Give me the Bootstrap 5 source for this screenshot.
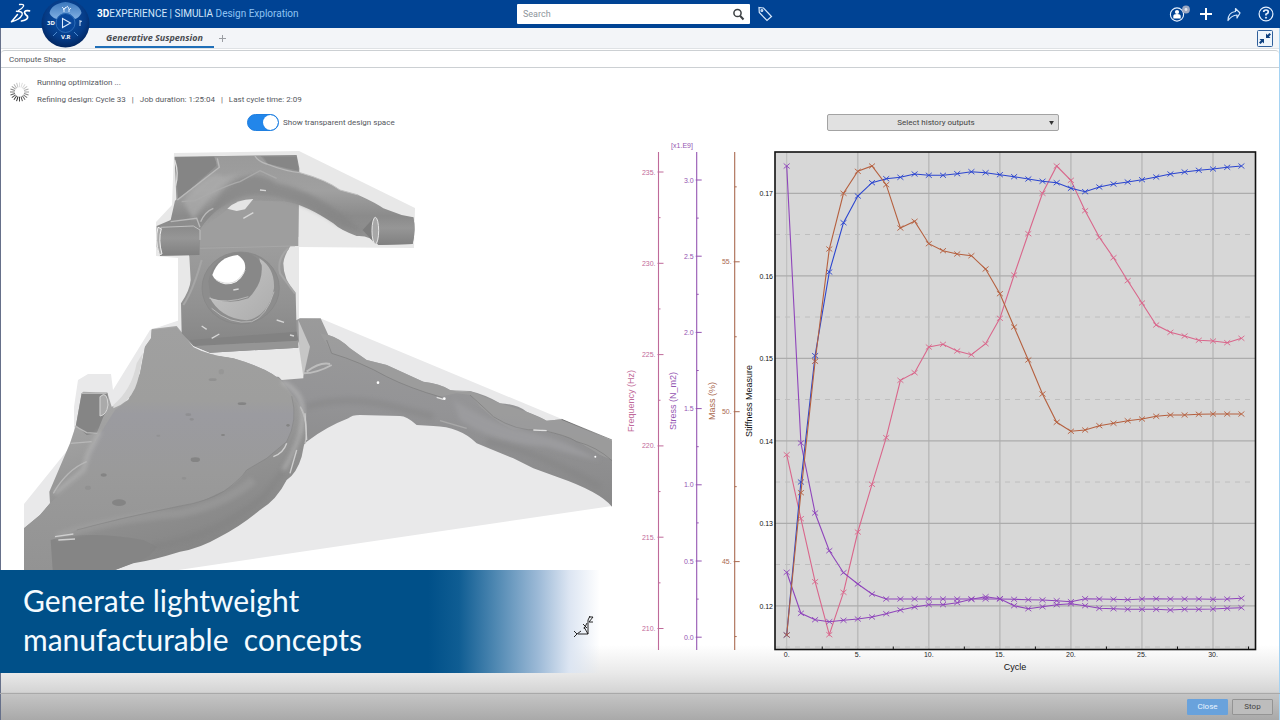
<!DOCTYPE html>
<html lang="en">
<head>
<meta charset="utf-8">
<meta name="viewport" content="width=device-width, initial-scale=1">
<title>Generative Suspension</title>
<link href="https://cdn.jsdelivr.net/npm/bootstrap@5.3.0/dist/css/bootstrap.min.css" rel="stylesheet">
<script src="https://cdn.jsdelivr.net/npm/bootstrap@5.3.0/dist/js/bootstrap.bundle.min.js"></script>
<style>
  body { font-family: Roboto, "Noto Sans", sans-serif; font-size: 8px; line-height: 12px; color: #55585e; background: #fff; }
  svg { display: block; }
  .app { background: linear-gradient(to top, #a9a9a9 0, #c6c6c6 27px, #d4d4d4 28px, #e9e9e9 47px, #fff 75px) no-repeat; box-shadow: inset 1px 0 #66708a, inset -1px 0 #a5d3f3; }
  .topbar { height: 28px; background: #004394; color: #fff; }
  .side-a { flex: 517 1 0; min-width: 0; }
  .side-b { flex: 530 1 0; min-width: 0; }
  .tools { margin-right: 5px; }
  .help { margin-left: 6px; }
  .brand-text { font-size: 10px; color: #d3e6fa; margin-left: 65px; }
  .brand-text strong { color: #fff; }
  .brand-text .product { color: #8fc3f3; }
  .compass { left: 41px; top: 0; z-index: 5; }
  .finder { width: 233px; height: 20px; background: #fff; border-radius: 1px; }
  .finder input { font-size: 9px; line-height: 12px; color: #444; padding: 0 6px; border: 0; background: transparent; box-shadow: none; min-height: 0; }
  .finder input::placeholder { color: #8e959c; }
  .bare { padding: 0; border: 0; background: none; color: #fff; line-height: 1; }
  .tabs { height: 21px; background: #f3f5f8; border-bottom: 1px solid #dfe2e5; padding-left: 94px; padding-right: 6px; margin: 0 1px; }
  .tab-link { width: 119px; height: 20px; font: italic bold 9px/20px "Noto Sans", "Open Sans", sans-serif; color: #4a4d52; border-bottom: 2px solid #1f6fb8; text-decoration: none; text-align: center; }
  .panel-title { height: 18px; margin: 1px 1px 0; padding: 0 8px; border: solid #ccd0d3; border-width: 1px 0; border-radius: 4px 4px 0 0; font-size: 8px; line-height: 17px; font-weight: 400; }
  .col-model { flex: 612 1 0; min-width: 0; }
  .col-chart { flex: 668 1 0; min-width: 0; }
  .status { height: 46px; padding: 9px 10px 0; }
  .status p { margin: 0 0 5px; }
  .status .split { margin: 0 6px; }
  .toggle-row { height: 18px; min-height: 0; padding: 0 0 1px 247px; }
  .form-switch .form-check-input.wide { width: 32px; height: 17px; margin: 0 4px 0 0; border-color: #1f7fe0; background-color: #2286ea; background-image: url("data:image/svg+xml,%3Csvg xmlns='http://www.w3.org/2000/svg' viewBox='0 0 16 16'%3E%3Ccircle cx='8' cy='8' r='8' fill='%23fff'/%3E%3C/svg%3E"); }
  .select-row { padding: 46px 0 0 215px; height: 64px; }
  .history { width: 232px; height: 17px; font-size: 8px; line-height: 12px; padding: 0 16px 0 2px; min-height: 0; text-align: center; text-align-last: center; color: #444; border: 1px solid #a3a3a3; border-radius: 2px; background: #e1e1e1 url("data:image/svg+xml,%3Csvg xmlns='http://www.w3.org/2000/svg' viewBox='0 0 6 5'%3E%3Cpath d='M0 0h6L3 5z' fill='%23333'/%3E%3C/svg%3E") no-repeat right 4px center / 5px 4px; }
  .caption-bar { height: 103px; padding: 11px 17px 0 23px; color: #f4fbff; font-family: Lato, sans-serif; font-size: 30px; line-height: 39px; background: linear-gradient(to right, #005089 0, #005089 70%, #0f5d93 75%, #4f88b2 81%, #9dbad7 88%, #dce5f2 93%, rgba(255,255,255,0) 98%); }
  .caption-bar p { white-space: pre; }
  .foot { height: 27px; border-top: 1px solid #a9a9a9; padding-right: 7px; }
  .foot .btn { width: 41px; height: 16px; padding: 0; font-size: 8px; line-height: 12px; border-radius: 1px; }
  .btn-close-job { background: #69a2dc; border-color: #69a2dc; color: #e9f4ff; }
  .btn-stop { background: #bdbdbd; border-color: #949494; color: #444; }
  .plot text { font-family: "Liberation Sans", Arial, sans-serif; font-size: 7px; }
  .plot .axis-name { font-size: 9px; }
</style>
</head>
<body>
<div class="app d-flex flex-column min-vh-100" id="app">
  <header class="topbar d-flex align-items-center position-relative">
    <div class="side-a d-flex align-items-center">
      <svg class="ms-2" width="24" height="22" viewBox="0 0 24 22" fill="none" stroke="#fff" stroke-linecap="round" stroke-linejoin="round" role="img" aria-label="DS">
        <path d="M11.500 1.500Q16.500 .8 15.500 3.200Q14.500 5.200 10.500 7.500" stroke-width="1.300"/>
        <path d="M8.500 8.300Q15.500 8.300 14 12Q12 16.500 3.500 18.800L9.500 11.500" stroke-width="1.500"/>
        <path d="M21.500 7.800Q16.500 7 16.500 9.500Q17 11.500 19.500 13.300Q20.800 16.500 13.500 18" stroke-width="1.700"/>
      </svg>
      <div class="brand-text text-nowrap"><strong>3D</strong>EXPERIENCE | SIMULIA <span class="product">Design Exploration</span></div>
    </div>
    <button class="compass bare position-absolute" type="button" aria-label="Compass">
      <svg width="49" height="48" viewBox="0 0 49 48">
        <defs><radialGradient id="ball" cx=".5" cy=".4" r=".6"><stop offset="0" stop-color="#0c55ac"/><stop offset=".7" stop-color="#053b86"/><stop offset="1" stop-color="#022660"/></radialGradient>
        <linearGradient id="lit" x2="0" y2="1"><stop offset="0" stop-color="#3c78bd"/><stop offset="1" stop-color="#80afe2"/></linearGradient></defs>
        <circle cx="24.500" cy="23.500" r="24" fill="url(#ball)"/>
        <path d="M8.500 13Q10 4 24.500 2Q39 4 40.500 13Q38 18 34 19Q30 13 24.500 13Q19 13 15.500 19Q10 17 8.500 13Z" fill="url(#lit)"/>
        <circle cx="24.500" cy="23" r="9.500" fill="#08479b" stroke="#3e7cc3" stroke-width=".7"/>
        <path d="M21.500 18.500L29.500 23L21.500 27.500Z" fill="none" stroke="#dcecff" stroke-width="1.100"/>
        <path d="M16 32L12 36M33 32L37 36" stroke="#4e8ace"/>
        <path d="M21 7l2 2v3m2-5l-2 2m4-2l1 2v3m2-4l-2 2m-6 0l5-4M39 20v6m0-4l2-1" stroke="#e4f0ff" fill="none" stroke-width=".9"/>
        <g fill="#fff" font-family="Open Sans, sans-serif" font-weight="700" font-size="6"><text x="6" y="25">3D</text><text x="20" y="39">V.R</text></g>
      </svg>
    </button>
    <form class="finder d-flex align-items-center" role="search">
      <input class="form-control" type="search" placeholder="Search" aria-label="Search">
      <button class="bare pe-1" type="button" aria-label="Find"><svg width="14" height="14" viewBox="0 0 14 14" fill="none" stroke="#3c4043"><circle cx="5.500" cy="6" r="3.600" stroke-width="1.500"/><path d="M8 8.700L11.500 12.500" stroke-width="2"/></svg></button>
    </form>
    <div class="side-b d-flex align-items-center">
      <button class="bare ms-2 me-auto" type="button" aria-label="Tags"><svg width="16" height="18" viewBox="0 0 16 18" fill="none" stroke="#d5e7fb" stroke-width="1.200"><path d="M1 2.500L5.500 3L13.500 11.500L9 15.500L1.300 7.500Z"/><circle cx="3.900" cy="5.500" r=".9"/></svg></button>
      <div class="tools d-flex align-items-center gap-2">
        <button class="bare" type="button" aria-label="Profile"><svg width="22" height="20" viewBox="0 0 22 20"><circle cx="8" cy="10.500" r="6.600" fill="none" stroke="#e6f1ff" stroke-width="1.100"/><circle cx="8" cy="8" r="2.100" fill="#fff"/><path d="M4.300 14.500V12q0-2 3.700-2t3.700 2v2.500Z" fill="#fff"/><circle cx="17" cy="5.500" r="3.900" fill="#9ca8c2"/><circle cx="17" cy="5.500" r="1.400" fill="#e3e7ef"/></svg></button>
        <button class="bare" type="button" aria-label="Add"><svg width="14" height="14" viewBox="0 0 14 14" stroke="#fff" stroke-width="2"><path d="M7 1v12M1 7h12"/></svg></button>
        <button class="bare ms-1" type="button" aria-label="Share"><svg width="18" height="16" viewBox="0 0 18 16" fill="none" stroke="#d5e7fb" stroke-width="1.200" stroke-linejoin="round"><path d="M3 14.500Q3 6.500 10.500 5.500V2.500L15 7L12 12V9Q6.500 9.500 3 14.500Z"/></svg></button>
        <button class="bare help" type="button" aria-label="Help"><svg width="18" height="18" viewBox="0 0 18 18" fill="none" stroke="#e6f1ff"><circle cx="9" cy="9" r="6.900" stroke-width="1.200"/><path d="M6.700 7Q6.700 5 9 5T11.300 7Q11.300 8.300 9 9.200V10.500" stroke-width="1.700"/><circle cx="9" cy="12.700" r=".6" fill="#fff"/></svg></button>
      </div>
    </div>
  </header>

  <nav class="tabs d-flex align-items-center">
    <a class="tab-link" href="#app">Generative Suspension</a>
    <button class="bare ms-1" type="button" aria-label="New tab"><svg width="9" height="9" viewBox="0 0 9 9" stroke="#9b9ea3"><path d="M4.500 1v7M1 4.500h7"/></svg></button>
    <button class="bare ms-auto" type="button" aria-label="Collapse"><svg width="16" height="17" viewBox="0 0 16 17"><rect x=".5" y=".5" width="15" height="16" rx="1" fill="#eef5fc" stroke="#2f5f9b"/><path d="M9 3.500V8H13.500L12 6.500L14 4.500L12.500 3L10.500 5ZM7 13.500V9H2.500L4 10.500L2 12.500L3.500 14L5.500 12Z" fill="#0c3f7f"/></svg></button>
  </nav>

  <h1 class="panel-title">Compute Shape</h1>

  <main class="d-flex flex-grow-1">
    <section class="col-model d-flex flex-column">
      <div class="status d-flex">
        <svg class="me-2 mt-1" width="19" height="22" viewBox="-10 -11 20 22" id="spinner" role="img" aria-label="Busy"></svg>
        <div class="text-nowrap">
          <p>Running optimization ...</p>
          <p>Refining design: Cycle 33<span class="split">|</span>Job duration: 1:25:04<span class="split">|</span>Last cycle time: 2:09</p>
        </div>
      </div>
      <div class="toggle-row form-check form-switch d-flex align-items-center m-0">
        <input class="form-check-input wide" type="checkbox" role="switch" id="transparent" checked>
        <label for="transparent">Show transparent design space</label>
      </div>
      <svg width="100%" viewBox="0 132 612 438" role="img" aria-label="Suspension model">
        <defs>
          <linearGradient id="arm" x2="0" y2="1"><stop offset="0" stop-color="#9a9a9a"/><stop offset=".35" stop-color="#a0a0a0"/><stop offset=".6" stop-color="#8b8b8b"/><stop offset="1" stop-color="#949494"/></linearGradient>
          <linearGradient id="tube" x2="0" y2="1"><stop offset="0" stop-color="#8b8b8b"/><stop offset=".4" stop-color="#969696"/><stop offset="1" stop-color="#808080"/></linearGradient>
          <linearGradient id="block" x2="0" y2="1"><stop offset="0" stop-color="#8e8e8e"/><stop offset=".4" stop-color="#9f9f9f"/><stop offset=".75" stop-color="#929292"/><stop offset="1" stop-color="#848484"/></linearGradient>
          <linearGradient id="plate" x2="0" y2="1"><stop offset="0" stop-color="#a0a0a0"/><stop offset=".3" stop-color="#9e9e9d"/><stop offset=".36" stop-color="#9b9ba0"/><stop offset=".6" stop-color="#9a9a9a"/><stop offset="1" stop-color="#939393"/></linearGradient>
          <linearGradient id="rim" x1=".2" y1=".3" x2=".45" y2="1"><stop offset="0" stop-color="#a8a8a8"/><stop offset=".5" stop-color="#949494"/><stop offset="1" stop-color="#858585"/></linearGradient>
          <linearGradient id="leg" x1=".4" y1="0" x2=".25" y2="1"><stop offset="0" stop-color="#9b9b9b"/><stop offset=".45" stop-color="#949496"/><stop offset="1" stop-color="#868686"/></linearGradient>
          <linearGradient id="bore" x2="1" y2="1"><stop offset="0" stop-color="#c8c8c8"/><stop offset="1" stop-color="#acacac"/></linearGradient>
          <filter id="soft" x="-20%" y="-20%" width="140%" height="140%"><feGaussianBlur stdDeviation="6"/></filter>
          <filter id="fine" x="-20%" y="-20%" width="140%" height="140%"><feGaussianBlur stdDeviation="1.800"/></filter>
        </defs>
        <!-- transparent design space -->
        <path d="M24 504L74 442V407L78 380L88 374H111L113 390L150 330L180 320L300 318L322 319L612 440V506L320 549L165 572H24Z" fill="#e9e9ea"/>
        <path d="M174 153L299 151L415 208L414 248L299 247V322L178 326V258L156 256V222L172 205Z" fill="#e8e8e8"/>

        <!-- leg reaching to the right -->
        <g transform="translate(300 310) scale(.33333)">
          <path d="M-30 40L0 25L62 25L85 75Q120 85 150 115L200 150L260 165L370 215Q420 220 450 240Q480 248 510 243Q560 255 600 280Q650 282 680 305Q720 320 740 332L785 328L936 392V590Q900 545 770 500L700 475L640 445L530 400Q480 350 400 348L350 345Q320 318 300 318L180 315Q155 315 145 325Q80 350 20 395L-60 480L-110 420L-80 200H0L15 140Z" fill="url(#leg)"/>
          <path d="M60 70L85 75Q120 85 150 115L200 150L260 165L370 215Q420 220 450 240L510 243L600 280L680 305L740 332L785 328L936 392V450L900 435Q840 395 800 380Q700 350 640 360Q570 330 510 255L470 250L420 260Q330 235 270 205Q180 155 95 130Z" fill="#9e9e9e" opacity=".8"/>
          <path d="M80 90L95 130Q180 155 260 200Q330 235 425 262M510 255Q560 300 580 320Q650 365 720 360Q800 375 830 395Q890 410 936 452" fill="none" stroke="#7c7c7c" stroke-width="2"/>
          <path d="M460 270Q560 330 640 355Q760 380 820 410L900 450Q840 440 740 410Q580 400 480 330Z" fill="#9b9b9e" filter="url(#soft)"/>
          <path d="M20 290Q150 250 320 300L400 320M560 395Q700 420 900 530" fill="none" stroke="#818181" stroke-width="22" opacity=".35" filter="url(#soft)"/>
          <path d="M10 190Q50 190 95 165M20 185Q60 155 90 162M0 290Q25 330 15 400" fill="none" stroke="#bdbdbd" stroke-width="6" filter="url(#fine)"/>
          <path d="M420 332L500 355" fill="none" stroke="#a9a9a9" stroke-width="4" filter="url(#fine)"/>
          <path d="M410 262L430 268M700 360L740 362" fill="none" stroke="#e1e1e1" stroke-width="4" filter="url(#fine)"/>
          <path d="M785 328L936 390" stroke="#5d5d5d" stroke-width="2"/>
          <circle cx="234" cy="218" r="4" fill="#fff"/><circle cx="433" cy="266" r="4" fill="#fff"/><circle cx="886" cy="440" r="3" fill="#fff"/>
        </g>

        <!-- round plate and lower rim -->
        <g transform="translate(20 310) scale(.33333)">
          <path d="M12 655L60 615L90 580L88 545L150 400L168 345L185 250L190 245L262 248L275 290L325 270L360 190L375 110L393 85L395 57L470 48L500 85L520 112Q560 135 640 145Q760 180 790 220L825 265Q865 330 855 390L845 440Q830 490 800 510Q770 570 720 600Q660 650 600 680Q540 715 480 725Q400 750 340 760L285 780H12Z" fill="url(#rim)"/>
          <path d="M375 110L393 85L395 60L470 52L500 88L520 112Q560 135 640 145Q760 180 790 220L815 258Q835 330 800 395L740 445L680 480Q650 530 590 552Q540 580 480 588L300 625L170 660L95 690L100 780H12V655L60 615L90 580L190 490L210 420L285 300L325 270L360 190Z" fill="url(#plate)"/>
          <path d="M92 690Q200 660 370 690L410 710Q390 745 340 758L285 780H98Z" fill="#858585"/>
          <path d="M110 680Q300 620 480 610Q620 580 700 510" fill="none" stroke="#a8a8a8" stroke-width="26" opacity=".35" filter="url(#soft)"/>
          <path d="M400 710Q590 680 730 560Q820 460 840 370" fill="none" stroke="#7e7e7e" stroke-width="20" opacity=".3" filter="url(#soft)"/>
          <path d="M170 660Q300 625 480 588Q560 575 610 545Q660 510 680 480L740 445L800 395Q835 330 815 258" fill="none" stroke="#808080" stroke-width="1.500"/>
          <path d="M105 680L160 672M115 690L165 687M800 400Q790 430 760 440M855 310L860 390M830 420L810 490" fill="none" stroke="#d0d0d0" stroke-width="4" filter="url(#fine)"/>
          <path d="M785 215Q820 230 840 265Q860 320 830 400Q810 450 790 480" fill="none" stroke="#bbb" stroke-width="12" opacity=".7" filter="url(#soft)"/>
          <!-- lug on the left edge -->
          <path d="M168 345L185 250L262 248Q270 290 250 320L230 370L200 375Z" fill="#858585"/>
          <path d="M240 260Q262 240 264 285Q260 315 240 318Z" fill="#aaa" stroke="#d5d5d5" stroke-width="3"/>
          <path d="M165 348L200 368L232 370M152 400L215 395M186 250L260 250M100 550Q140 480 200 455" fill="none" stroke="#b8b8b8" stroke-width="4" filter="url(#fine)"/>
          <path d="M240 365L205 430L190 480L105 550" fill="none" stroke="#b8b8b8" stroke-width="12" opacity=".7" filter="url(#soft)"/>
          <path d="M280 295Q325 280 345 235Q360 200 368 130L350 160Q335 240 280 285Z" fill="#d9d9d9"/>
          <g fill="#848484"><ellipse cx="297" cy="578" rx="21" ry="10"/><ellipse cx="526" cy="449" rx="14" ry="7"/><ellipse cx="251" cy="495" rx="9" ry="5"/><ellipse cx="666" cy="281" rx="13" ry="4"/><ellipse cx="204" cy="533" rx="9" ry="6" opacity=".4"/><ellipse cx="505" cy="314" rx="9" ry="4" opacity=".5"/><ellipse cx="515" cy="328" rx="6" ry="4" opacity=".5"/><ellipse cx="578" cy="209" rx="12" ry="4" opacity=".5"/><ellipse cx="604" cy="185" rx="8" ry="8" opacity=".3"/><ellipse cx="609" cy="375" rx="6" ry="3"/><ellipse cx="415" cy="377" rx="6" ry="3" opacity=".4"/><ellipse cx="492" cy="505" rx="7" ry="4" opacity=".4"/><ellipse cx="804" cy="346" rx="5" ry="4"/></g>
          <path d="M580 134L838 118L850 160V205L785 210Q750 165 640 143Z" fill="#e9e9e9"/>
          <path d="M835 30L870 110L850 200L838 118Z" fill="#c6c6c6"/>
        </g>

        <!-- knuckle block and upper arm -->
        <g transform="translate(140 140) scale(.33333)">
          <path d="M104 50L470 45L478 85L475 290Q435 330 430 370Q430 420 467 460L470 580L475 623L210 638L160 618L125 580L123 490Q150 450 152 420L148 350L110 200Z" fill="url(#block)"/>
          <path d="M180 270L300 180L475 185V318H180Z" fill="#9e9e9e"/>
          <path d="M180 325L465 318" stroke="#acacac" stroke-width="2"/>
          <path d="M104 52L230 50L228 78L115 182Z" fill="#858585"/><path d="M104 60Q118 100 106 140" fill="none" stroke="#ddd" stroke-width="4"/>
          <path d="M370 50H470L476 92L385 72Z" fill="#868686"/>
          <path d="M148 600L470 575L475 602L165 618Z" fill="#828282"/><path d="M165 618L475 602V623L210 638Z" fill="#959595"/>
          <path d="M130 495Q160 450 185 360M465 460L420 400Q410 355 445 325" fill="none" stroke="#a6a6a6" stroke-width="6" filter="url(#fine)"/>
          <ellipse cx="302" cy="444" rx="116" ry="108" fill="#8d8d8d" stroke="#858585" stroke-width="2"/>
          <path d="M208 470Q260 495 325 470Q375 420 358 355Q405 385 402 445Q385 530 320 541Q240 535 208 470Z" fill="url(#bore)"/>
          <path d="M205 425Q215 360 280 340Q345 330 365 375Q370 430 325 475Q270 495 212 475Z" fill="#888"/>
          <path d="M217 405Q235 350 293 345Q325 365 312 400Q295 435 255 433Q225 425 217 405Z" fill="#fff"/>
          <path d="M228 420Q285 450 316 390M208 475Q260 493 325 470M215 505Q270 555 335 545Q380 530 402 455" fill="none" stroke="#c8c8c8" stroke-width="3" opacity=".7"/>
          <path d="M50 258L92 240L105 182L235 85L222 48H362L380 70L480 98Q560 120 600 150L655 165Q710 190 730 205L785 225L820 232Q828 270 818 312L715 315Q690 285 650 288Q600 270 580 250Q500 195 440 185Q360 160 280 185Q225 200 180 268V345L60 347L50 320Z" fill="url(#arm)"/>
          <path d="M250 150Q330 75 410 130Q540 155 670 275Q600 265 560 230Q450 170 370 168Q280 155 180 250Z" fill="#858585" opacity=".75" filter="url(#soft)"/>
          <path d="M130 185Q210 80 250 110L350 90L290 105Q220 150 160 240Z" fill="#adadad" opacity=".7" filter="url(#soft)"/>
          <path d="M232 55L238 82L112 180M345 48Q355 65 380 72Q440 95 480 98M182 245Q195 215 220 205M92 245L170 235L180 262" fill="none" stroke="#b9b9b9" stroke-width="4" filter="url(#fine)"/>
          <path d="M125 185L165 182Q260 135 300 125L360 92L410 115" fill="none" stroke="#aaa" stroke-width="4" filter="url(#fine)"/>
          <path d="M262 206Q290 178 340 177L315 208L290 213Z" fill="#e4e4e4"/>
          <path d="M56 260L178 265V345L60 347Z" fill="url(#tube)"/>
          <path d="M54 262Q44 300 58 344L66 342Q54 300 64 266Z" fill="#aaa" stroke="#f0f0f0" stroke-width="3"/>
          <path d="M62 262L160 258L180 270V300M480 98Q560 120 600 150L655 165" fill="none" stroke="#c0c0c0" stroke-width="3" filter="url(#fine)"/>
          <path d="M705 230L820 232Q828 270 818 312L715 315Z" fill="url(#tube)"/>
          <path d="M668 270L700 235V305Z" fill="#7d7d7d"/>
          <ellipse cx="706" cy="272" rx="10" ry="40" fill="#a7a7a7" stroke="#e6e6e6" stroke-width="3"/>
          <path d="M310 235L340 218M360 150L378 152M185 558L200 568M215 595L238 582M410 540L432 547M450 585L462 588M280 450L296 447" stroke="#d6d6d6" stroke-width="4" filter="url(#fine)"/>
        </g>
      </svg>
      <div class="caption-bar d-flex align-items-start justify-content-between">
        <p class="m-0">Generate lightweight
manufacturable  concepts</p>
        <svg class="mt-4" width="22" height="32" viewBox="0 0 22 32" fill="none" stroke="#111" stroke-width=".9" role="img" aria-label="Axis triad"><path d="M15 29V15L17 11M15 29H5M15 29L11 22M16 12H20L16 17H20M1 26L4 29L8 26M4 29L1 32M10 19L14 23M14 18L11 24"/></svg>
      </div>
    </section>

    <section class="col-chart">
      <div class="select-row">
        <select class="form-select history" aria-label="History outputs"><option>Select history outputs</option></select>
      </div>
      <svg class="plot" id="plot" width="100%" viewBox="612 132 668 541" role="img" aria-label="History outputs per cycle">
        <defs></defs>
      </svg>
    </section>
  </main>

  <footer class="foot d-flex align-items-center justify-content-end gap-1">
    <button class="btn btn-close-job" type="button">Close</button>
    <button class="btn btn-stop" type="button">Stop</button>
  </footer>
</div>

<script>
  const NS = 'http://www.w3.org/2000/svg';
  function add(parent, name, attrs, text) {
    const el = document.createElementNS(NS, name);
    for (const k in attrs) el.setAttribute(k, attrs[k]);
    if (text !== undefined) el.textContent = text;
    parent.appendChild(el);
    return el;
  }

  // Busy indicator: spokes that fade around the ring
  const spinner = document.getElementById('spinner');
  for (let i = 0; i < 20; i++) {
    const fade = Math.max(.15, 1 - Math.abs(i - 11) / 11);
    add(spinner, 'path', { d: 'M0-5V-10', stroke: '#222', 'stroke-width': 1, opacity: fade, transform: 'rotate(' + i * 18 + ')' });
  }

  const plot = document.getElementById('plot'), defs = plot.querySelector('defs');
  const L = 775, R = 1255.5, T = 152, B = 649.5;
  const px = c => 786.7 + c * 14.21;
  const line = (x1, y1, x2, y2, stroke, w, extra) => add(plot, 'line', Object.assign({ x1, y1, x2, y2, stroke, 'stroke-width': w }, extra));

  add(plot, 'rect', { x: L, y: T, width: R - L, height: B - T, fill: '#d7d7d7' });
  for (let c = 0; c <= 30; c += 5) {
    line(px(c), T, px(c), B, '#bcbcbc', c ? 1.6 : 1);
    add(plot, 'text', { x: px(c), y: 657, 'text-anchor': 'middle', fill: '#222' }, c + '.');
  }
  for (let i = 0; i < 6; i++) {
    const y = 193.3 + i * 82.5;
    line(L, y, R, y, '#acacac', 1.2);
    line(L, y + 41.2, R, y + 41.2, '#bebebe', 1, { 'stroke-dasharray': '5 5' });
    add(plot, 'text', { x: 773, y: y + 3, 'text-anchor': 'end', fill: '#111' }, (0.17 - i * 0.01).toFixed(2));
  }
  add(plot, 'rect', { x: L, y: T, width: R - L, height: B - T, fill: 'none', stroke: '#111', 'stroke-width': 1.6 });
  for (let c = 2.5; c < 33; c += 5) line(px(c), B, px(c), B - 3, '#111', 1);

  function axis(x, color, first, step, labels, name, nameX, nameY) {
    line(x, T, x, 650, color, 1.1);
    labels.forEach((t, i) => {
      const y = first + i * step;
      line(x - 1, y, x + 5, y, color, 1);
      add(plot, 'text', { x: x - 3, y: y + 2.5, 'text-anchor': 'end', fill: color }, t);
    });
    for (let y = first - step / 2; y < 650; y += step) if (y > T + 5) line(x, y, x + 2, y, color, 1);
    title(name, nameX, nameY, color);
  }
  function title(t, x, y, fill) {
    add(plot, 'text', { class: 'axis-name', transform: 'translate(' + x + ' ' + y + ') rotate(-90)', 'text-anchor': 'middle', fill }, t);
  }
  axis(658.5, '#bf6a9a', 172, 91.3, ['235.', '230.', '225.', '220.', '215.', '210.'], 'Frequency (Hz)', 634, 401);
  axis(696.7, '#9455b2', 180, 76.2, ['3.0', '2.5', '2.0', '1.5', '1.0', '0.5', '0.0'], 'Stress (N_m2)', 676, 401);
  axis(734.7, '#aa6a50', 261.8, 149.9, ['55.', '50.', '45.'], 'Mass (%)', 715, 401);
  add(plot, 'text', { x: 682, y: 148, 'text-anchor': 'middle', fill: '#9455b2' }, '[x1.E9]');
  title('Stiffness Measure', 752, 401, '#111');
  add(plot, 'text', { class: 'axis-name', x: 1015, y: 670, 'text-anchor': 'middle', fill: '#111' }, 'Cycle');

  const series = {
    frequency: ['#d9668b', [454.7,518.7,581.7,634.7,592.3,532,484.3,437.7,380.3,372.7,347,344.3,351,354.7,343.7,318.3,275,233.7,193.3,166,180.3,210.7,237.3,257.7,280.7,303,325,332.3,336,340.3,341,342.7,338.3]],
    stress: ['#8f45bb', [166,443,513,550.7,572.7,584,594,599,599,599,599,599,599,599,599,599,599.3,599.7,600,600.7,601.7,598.7,599,599.3,599.7,599,598.7,599,599,599,599.3,599,598.3]],
    peak: ['#8f45bb', [572.3,613.3,619.7,621.7,620.3,619,617,613.7,610,607,604.7,604.7,602.7,599.3,596.7,598.7,605.7,608.7,606.7,604.7,603.7,605.7,608.3,608.7,609.3,609.3,609.3,610,609.3,609.3,609,608.3,607.7]],
    stiffness: ['#2b45cf', [635,482,355.7,272,222.7,196,182.7,178.7,177.3,174,175.3,175.3,173.7,171.7,172.7,174.7,176.7,179,181.3,182.7,188.3,191.7,187,184,182,179.7,177,174,172,170.3,169,167.3,166]],
    mass: ['#b5603f', [635,492.7,361.3,249,193.3,171.3,166,184.7,228,221.3,243.7,250.7,254,255.7,269,293.7,327,360,394,422.3,431.3,430,425.7,423.3,420.7,419,416.3,415,415,414.3,414,414,414]]
  };
  for (const id in series) {
    const color = series[id][0];
    const m = add(defs, 'marker', { id: 'x-' + id, viewBox: '-4 -4 8 8', markerWidth: 8, markerHeight: 8, markerUnits: 'userSpaceOnUse' });
    add(m, 'path', { d: 'M-3-2.5L3 2.5M3-2.5L-3 2.5', stroke: color, 'stroke-width': .9 });
    const ref = 'url(#x-' + id + ')';
    add(plot, 'polyline', { points: series[id][1].map((y, c) => px(c).toFixed(1) + ',' + y).join(' '), fill: 'none', stroke: color, 'stroke-width': 1.1, 'marker-start': ref, 'marker-mid': ref, 'marker-end': ref });
  }
</script>
</body>
</html>
